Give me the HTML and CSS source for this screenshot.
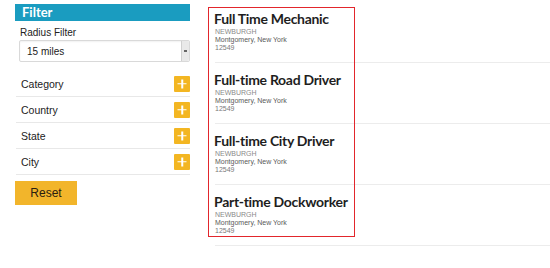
FILE: index.html
```html
<!DOCTYPE html>
<html>
<head>
<meta charset="utf-8">
<link rel="stylesheet" href="styles.css">
</head>
<body>
<div class="page">
  <aside class="sidebar">
    <div class="filter-head">Filter</div>
    <div class="field-label">Radius Filter</div>
    <div class="select">
      <span class="select-value">15 miles</span>
      <span class="select-arrow"><span class="dash"></span></span>
    </div>
    <div class="facets">
      <div class="facet"><span>Category</span><span class="plus"></span></div>
      <div class="facet"><span>Country</span><span class="plus"></span></div>
      <div class="facet"><span>State</span><span class="plus"></span></div>
      <div class="facet"><span>City</span><span class="plus"></span></div>
    </div>
    <button class="reset">Reset</button>
  </aside>
  <main class="results">
    <div class="job">
      <div class="job-title">Full Time Mechanic</div>
      <div class="job-city">NEWBURGH</div>
      <div class="job-loc">Montgomery, New York</div>
      <div class="job-zip">12549</div>
    </div>
    <div class="job">
      <div class="job-title">Full-time Road Driver</div>
      <div class="job-city">NEWBURGH</div>
      <div class="job-loc">Montgomery, New York</div>
      <div class="job-zip">12549</div>
    </div>
    <div class="job">
      <div class="job-title">Full-time City Driver</div>
      <div class="job-city">NEWBURGH</div>
      <div class="job-loc">Montgomery, New York</div>
      <div class="job-zip">12549</div>
    </div>
    <div class="job">
      <div class="job-title">Part-time Dockworker</div>
      <div class="job-city">NEWBURGH</div>
      <div class="job-loc">Montgomery, New York</div>
      <div class="job-zip">12549</div>
    </div>
    <div class="highlight"></div>
  </main>
</div>
</body>
</html>
```

FILE: styles.css
```css
html, body {
  margin: 0;
  padding: 0;
  background: #ffffff;
}
body {
  font-family: "Liberation Sans", Arial, sans-serif;
  color: #222;
  width: 550px;
  height: 268px;
  overflow: hidden;
}
.page {
  display: flex;
  align-items: flex-start;
}
.sidebar {
  width: 175px;
  margin-left: 15px;
  margin-top: 4px;
  display: flex;
  flex-direction: column;
}
.filter-head {
  height: 17px;
  background: #1a9cc0;
  color: #fff;
  font-family: Lato, sans-serif;
  font-weight: 700;
  font-size: 13px;
  line-height: 17px;
  padding-left: 7px;
}
.field-label {
  margin-top: 6px;
  margin-left: 5px;
  font-size: 10px;
  line-height: 12px;
  color: #222;
}
.select {
  margin-top: 1px;
  margin-left: 4px;
  height: 20px;
  border: 1px solid #d9d9d9;
  border-radius: 2px;
  box-shadow: inset 0 1px 2px rgba(0,0,0,0.06);
  display: flex;
  align-items: center;
  justify-content: space-between;
}
.select-value {
  font-size: 10px;
  padding-left: 7px;
  color: #222;
}
.select-arrow {
  width: 7px;
  align-self: stretch;
  background: #e9e9e9;
  border-left: 1px solid #d0d0d0;
  border-radius: 0 2px 2px 0;
  display: flex;
  align-items: center;
  justify-content: center;
}
.dash {
  width: 3px;
  height: 2px;
  background: #666;
}
.facets {
  margin-top: 9px;
  margin-left: 1px;
  display: flex;
  flex-direction: column;
}
.facet {
  height: 26px;
  box-sizing: border-box;
  border-bottom: 1px solid #e8e8e8;
  display: flex;
  align-items: center;
  justify-content: space-between;
  padding-left: 5px;
  font-size: 10.5px;
  color: #222;
}
.plus {
  width: 16px;
  height: 16px;
  background: #f3b622;
  border-radius: 1px;
  position: relative;
}
.plus::before, .plus::after {
  content: "";
  position: absolute;
  background: #fff;
  left: 50%;
  top: 50%;
  transform: translate(-50%, -50%);
}
.plus::before { width: 9px; height: 1.5px; }
.plus::after { width: 1.5px; height: 9px; }
.reset {
  margin-top: 6px;
  width: 62px;
  height: 24px;
  border: none;
  background: #f2b52b;
  color: #2a2010;
  font-family: "Liberation Sans", Arial, sans-serif;
  font-size: 12px;
  padding: 0;
  cursor: pointer;
}
.results {
  margin-left: 25px;
  margin-top: 2px;
  flex: 1;
  position: relative;
  display: flex;
  flex-direction: column;
}
.job {
  height: 61px;
  box-sizing: border-box;
  border-bottom: 1px solid #ececec;
  padding-top: 9px;
  padding-left: 0;
}
.job-title {
  font-family: Lato, sans-serif;
  font-weight: 700;
  font-size: 14px;
  line-height: 16px;
  letter-spacing: -0.3px;
  color: #1e1e1e;
  margin-left: -1px;
}
.job-city, .job-loc, .job-zip {
  font-size: 7px;
  line-height: 8px;
}
.job-city { color: #8a8a8a; margin-top: 1px; }
.job-loc { color: #5a5a5a; }
.job-zip { color: #7a7a7a; }
.highlight {
  position: absolute;
  left: -7px;
  top: 5px;
  width: 145px;
  height: 228px;
  border: 1.5px solid #e2262c;
  pointer-events: none;
}
```
